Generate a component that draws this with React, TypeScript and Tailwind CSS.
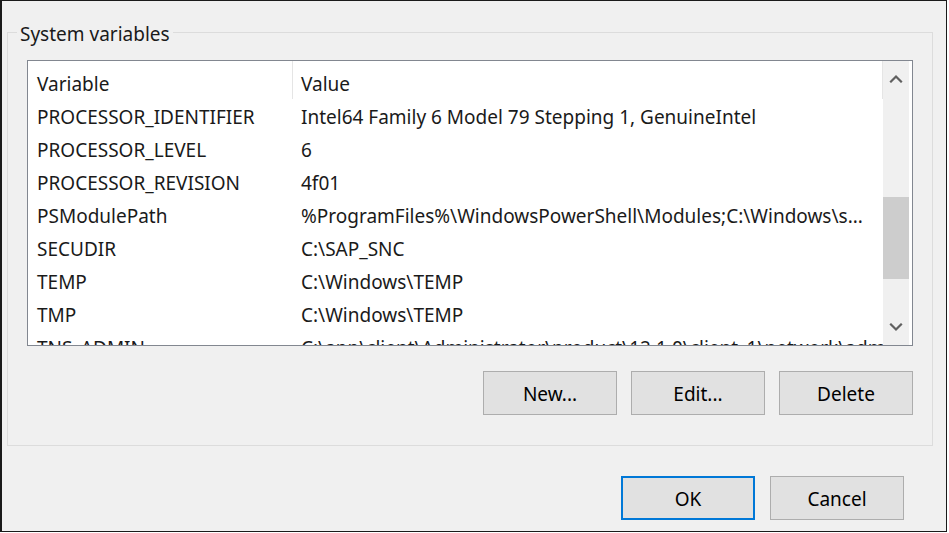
import React from "react";

const FONT = "font-['Segoe_UI','Noto_Sans','Open_Sans',sans-serif]";

const rows: [string, string][] = [
  ["PROCESSOR_IDENTIFIER", "Intel64 Family 6 Model 79 Stepping 1, GenuineIntel"],
  ["PROCESSOR_LEVEL", "6"],
  ["PROCESSOR_REVISION", "4f01"],
  ["PSModulePath", "%ProgramFiles%\\WindowsPowerShell\\Modules;C:\\Windows\\s..."],
  ["SECUDIR", "C:\\SAP_SNC"],
  ["TEMP", "C:\\Windows\\TEMP"],
  ["TMP", "C:\\Windows\\TEMP"],
  ["TNS_ADMIN", "C:\\app\\client\\Administrator\\product\\12.1.0\\client_1\\network\\admin"],
];

function Chevron({ up }: { up?: boolean }) {
  return (
    <svg width="14" height="9" viewBox="0 0 14 9" fill="none" stroke="#606060" strokeWidth="2.2" strokeLinecap="square">
      {up ? <path d="M2 7.5L7 2.5l5 5" /> : <path d="M2 1.5l5 5 5-5" />}
    </svg>
  );
}

function Button({ label, primary }: { label: string; primary?: boolean }) {
  return (
    <button
      className={
        "w-[134px] h-[44px] bg-[#e1e1e1] text-[19px] text-black flex items-center justify-center pt-[2px] " +
        (primary ? "border-2 border-[#0078d7]" : "border border-[#adadad]")
      }
    >
      {label}
    </button>
  );
}

export default function App() {
  return (
    <div className={`w-[949px] h-[533px] bg-white ${FONT}`}>
      <div className="w-[947px] h-[532px] border-l-2 border-t border-r border-b border-[#1a1a1a] bg-[#f0f0f0] flex flex-col">
        {/* System variables group */}
        <fieldset className="ml-[5px] mt-[18px] w-[926px] h-[427px] border border-[#dcdcdc] px-[19px] min-w-0">
          <legend className="ml-[-10px] px-[3px] text-[19px] leading-[26px] text-[#1a1a1a]">
            <span className="relative top-[2px]">System variables</span>
          </legend>

          <div className="mt-[15px] h-[286px] border border-[#828790] bg-white flex">
            <div className="flex-1 min-w-0 overflow-hidden text-[19px] text-[#1a1a1a]">
              <div className="h-[38px] flex items-center">
                <div className="w-[265px] pl-[9px] pt-[8px] border-r border-[#e5e5e5] h-full flex items-center">Variable</div>
                <div className="flex-1 pl-[8px] pt-[8px] border-r border-[#e5e5e5] h-full flex items-center">Value</div>
              </div>
              {rows.map(([name, value]) => (
                <div key={name} className="h-[33px] pt-[4px] flex items-center whitespace-nowrap">
                  <div className="w-[265px] pl-[9px] shrink-0">{name}</div>
                  <div className="flex-1 min-w-0 pl-[8px] overflow-hidden">{value}</div>
                </div>
              ))}
            </div>
            <div className="w-[26px] shrink-0 bg-[#f0f0f0] mr-[3px] flex flex-col items-center">
              <div className="h-[32px] w-full flex items-center justify-center pt-[2px]">
                <Chevron up />
              </div>
              <div className="flex-1 w-full pt-[104px]">
                <div className="h-[82px] w-full bg-[#cdcdcd]" />
              </div>
              <div className="h-[32px] w-full flex items-center justify-center pb-[4px]">
                <Chevron />
              </div>
            </div>
          </div>

          <div className="mt-[25px] flex justify-end gap-[14px]">
            <Button label="New..." />
            <Button label="Edit..." />
            <Button label="Delete" />
          </div>
        </fieldset>

        <div className="mt-[30px] flex justify-end gap-[15px] pr-[42px]">
          <Button label="OK" primary />
          <Button label="Cancel" />
        </div>
      </div>
    </div>
  );
}
